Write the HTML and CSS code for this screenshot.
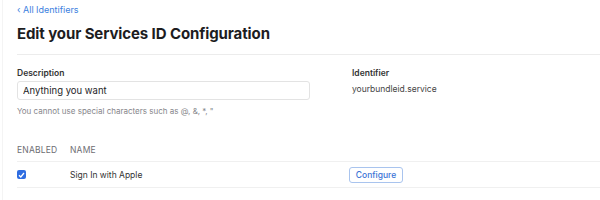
FILE: index.html
```html
<!DOCTYPE html>
<html lang="en">
<head>
    <meta charset="UTF-8">
    <title>Edit your Services ID Configuration</title>
    <link rel="stylesheet" href="styles.css">
</head>
<body>
    <div class="page">
        <a class="back" href="#">&lsaquo; All Identifiers</a>
        <h1 class="title">Edit your Services ID Configuration</h1>
        <div class="form-row">
            <div class="field">
                <label class="label" for="desc">Description</label>
                <input type="text" id="desc" class="text-input" value="Anything you want">
                <p class="hint">You cannot use special characters such as @, &amp;, *, "</p>
            </div>
            <div class="field ident">
                <div class="label">Identifier</div>
                <div class="value">yourbundleid.service</div>
            </div>
        </div>
        <div class="table">
            <div class="table-head">
                <span class="col-enabled">ENABLED</span>
                <span class="col-name">NAME</span>
            </div>
            <div class="table-row">
                <span class="col-enabled"><span class="check"><svg width="7" height="6" viewBox="0 0 7 6"><path d="M1 3.2 L2.8 5 L6 1" fill="none" stroke="#fff" stroke-width="1.3"/></svg></span></span>
                <span class="col-name">Sign In with Apple</span>
                <button class="configure">Configure</button>
            </div>
        </div>
    </div>
</body>
</html>
```

FILE: styles.css
```css
body {
    margin: 0;
    font-family: Inter, "Noto Sans", sans-serif;
    background: #fff;
    color: #1d1d1f;
}
.page {
    height: 200px;
    box-sizing: border-box;
    margin-left: 2px;
    padding: 4px 0 0 14px;
    border-left: 1px solid #f4f4f4;
}
.back {
    display: block;
    font-size: 9px;
    color: #3d7fe0;
    text-decoration: none;
    line-height: 12px;
}
.title {
    margin: 8px 0 0;
    font-size: 15px;
    font-weight: 700;
    line-height: 20px;
    letter-spacing: -0.1px;
    padding-bottom: 10px;
    border-bottom: 1px solid #ececec;
}
.form-row {
    display: flex;
    margin-top: 12px;
}
.field {
    flex: none;
    width: 335px;
}
.field.ident {
    width: auto;
}
.label {
    display: block;
    font-size: 8.5px;
    font-weight: 600;
    color: #333;
    line-height: 12px;
}
.text-input {
    display: block;
    margin-top: 2px;
    width: 293px;
    height: 19px;
    box-sizing: border-box;
    border: 1px solid #e3e3e3;
    border-radius: 3px;
    padding: 0 5px;
    font-family: inherit;
    font-size: 9.5px;
    color: #1d1d1f;
}
.hint {
    margin: 5px 0 0;
    font-size: 8px;
    color: #86868b;
    line-height: 12px;
}
.value {
    margin-top: 4px;
    font-size: 8.5px;
    color: #444;
    line-height: 12px;
}
.table {
    margin-top: 27px;
}
.table-head {
    display: flex;
    font-size: 8.5px;
    color: #6e6e73;
    letter-spacing: 0.2px;
    line-height: 12px;
    padding-bottom: 5px;
    border-bottom: 1px solid #f0f0f0;
}
.col-enabled {
    width: 53px;
}
.col-name {
    width: 279px;
}
.table-row {
    display: flex;
    align-items: center;
    height: 25px;
    border-bottom: 1px solid #f0f0f0;
    font-size: 8.5px;
    color: #333;
}
.check {
    display: flex;
    align-items: center;
    justify-content: center;
    width: 9px;
    height: 9px;
    border-radius: 2px;
    background: #2f6de1;
}
.configure {
    width: 54px;
    height: 16px;
    padding: 0;
    border: 1px solid #a9c4ee;
    border-radius: 3px;
    background: #fff;
    color: #3a74d6;
    font-family: inherit;
    font-size: 8.5px;
    font-weight: 500;
}
```
